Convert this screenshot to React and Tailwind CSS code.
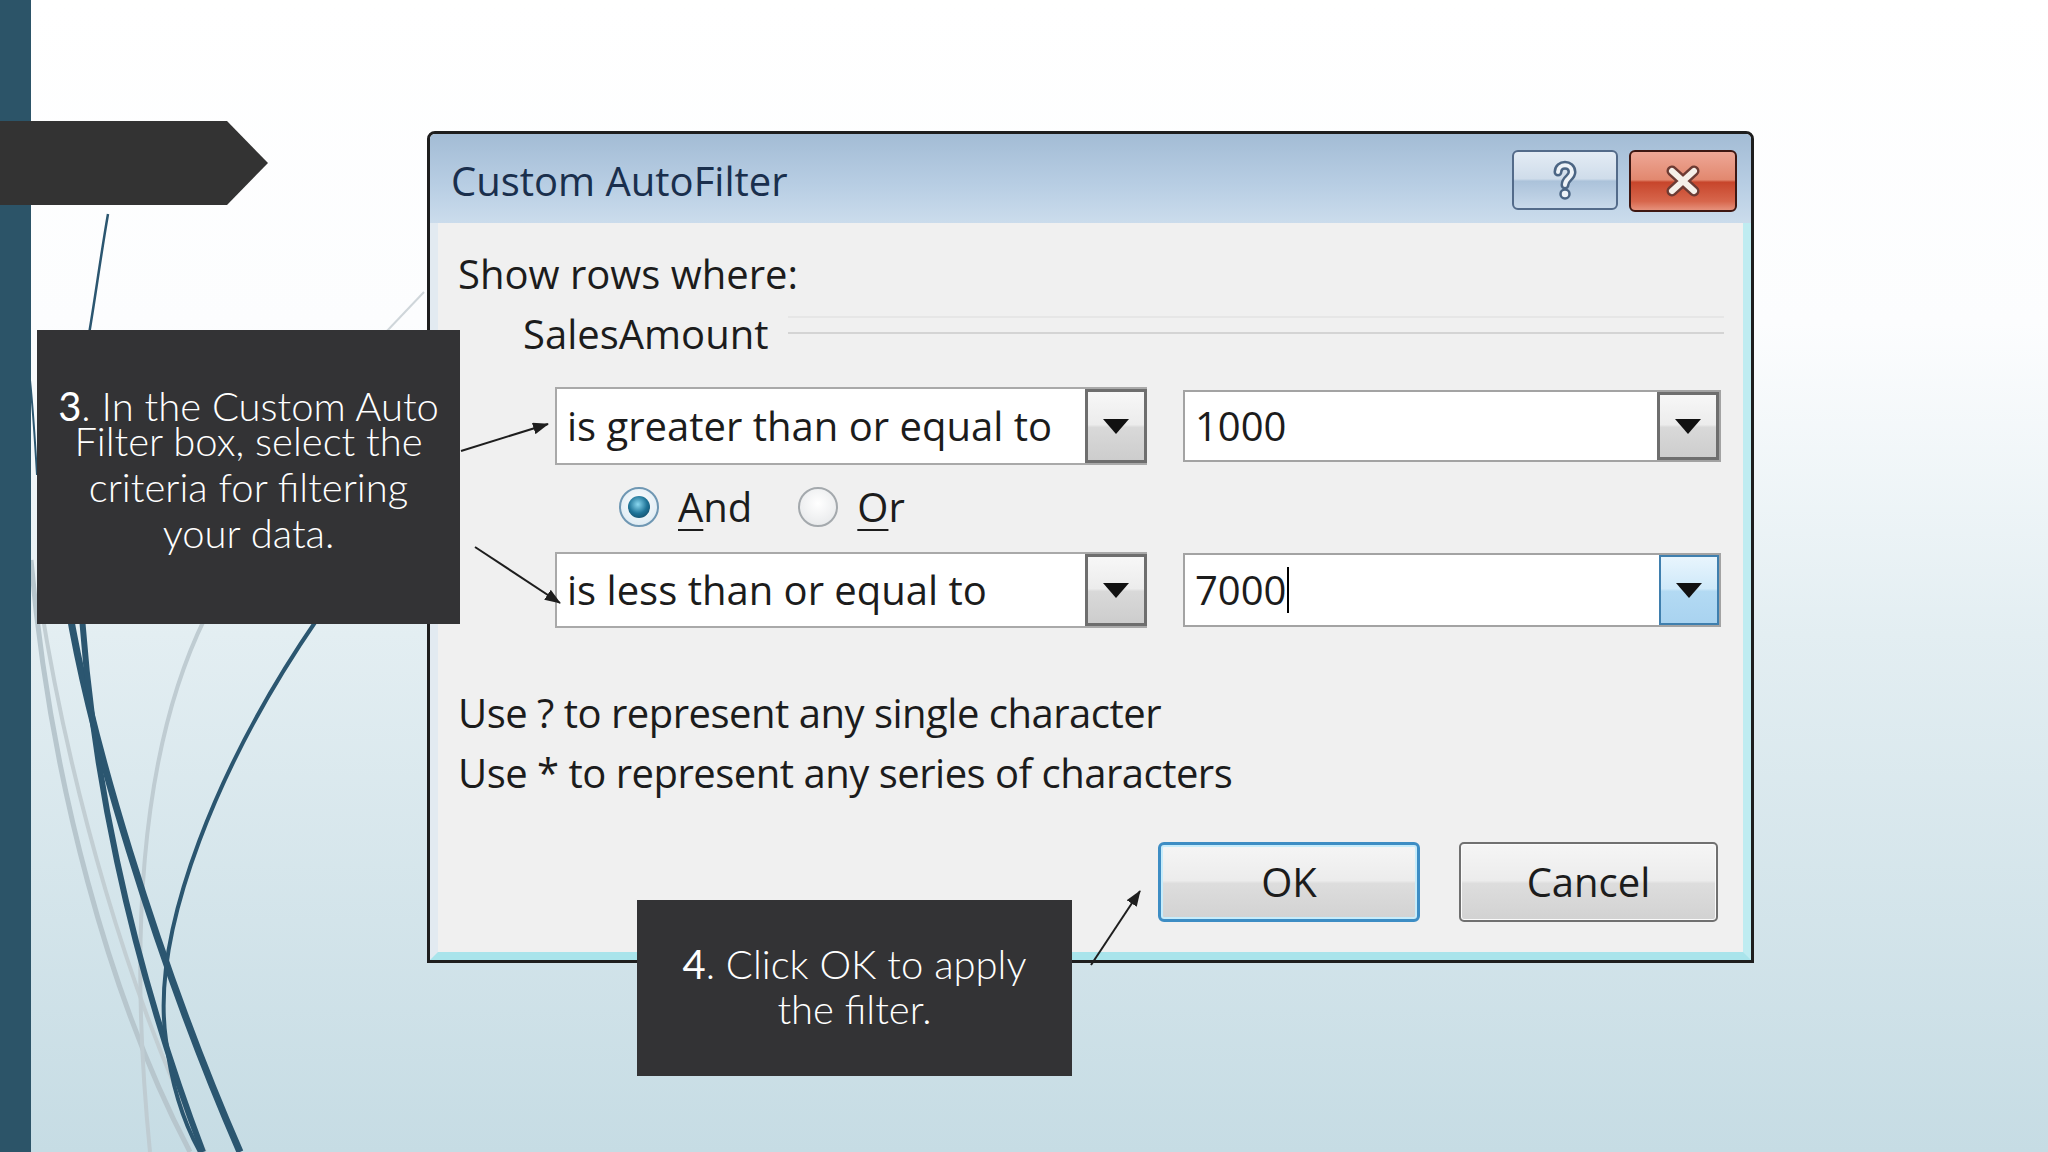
const ui = "font-['Open_Sans','Noto_Sans',sans-serif]";
const light = "font-['Lato','Open_Sans',sans-serif]";

function Caret() {
  return (
    <svg width="26" height="15" viewBox="0 0 26 15">
      <path d="M0 0H26L13 15Z" fill="#111" />
    </svg>
  );
}

function DropButton({ active }) {
  return (
    <div
      className={
        active
          ? "flex h-full w-[60px] shrink-0 items-center justify-center border-2 border-[#3f7fae] bg-[linear-gradient(#e8f5fd,#cfe9f9_48%,#b3daf3_52%,#a9d3f0)]"
          : "flex h-full w-[62px] shrink-0 items-center justify-center border-[3px] border-[#6e6e6e] bg-[linear-gradient(#f7f7f7,#ececec_48%,#d9d9d9_52%,#cdcdcd)]"
      }
    >
      <Caret />
    </div>
  );
}

function Radio({ checked }) {
  return (
    <div
      className={
        checked
          ? "flex h-[40px] w-[40px] shrink-0 items-center justify-center rounded-full border-2 border-[#6f97b3] bg-[radial-gradient(circle_at_50%_40%,#ffffff,#d6e6f0)]"
          : "flex h-[40px] w-[40px] shrink-0 items-center justify-center rounded-full border-2 border-[#a4a9ad] bg-[radial-gradient(circle_at_50%_40%,#ffffff,#e3e5e7)]"
      }
    >
      {checked && (
        <div className="h-[22px] w-[22px] rounded-full bg-[radial-gradient(circle_at_45%_38%,#8ad8f0,#1f7498_50%,#0c3b55)]" />
      )}
    </div>
  );
}

function HelpButton() {
  return (
    <div className="flex h-[60px] w-[106px] items-center justify-center rounded-[6px] border-2 border-[#536b8a] bg-[linear-gradient(#e3ecf5,#cfdcea_48%,#abc2da_52%,#c8d9ea)]">
      <svg width="30" height="42" viewBox="0 0 30 42">
        <path d="M8 13C8 4 22 4 22 13C22 19 15 19 15 26" fill="none" stroke="#4b6584" strokeWidth="9" strokeLinecap="round" />
        <path d="M8 13C8 4 22 4 22 13C22 19 15 19 15 26" fill="none" stroke="#eef3f8" strokeWidth="4" strokeLinecap="round" />
        <circle cx="15" cy="35" r="4.5" fill="#eef3f8" stroke="#4b6584" strokeWidth="2.5" />
      </svg>
    </div>
  );
}

function CloseButton() {
  return (
    <div className="flex h-[62px] w-[108px] items-center justify-center rounded-[6px] border-2 border-[#3e1712] bg-[linear-gradient(#eea796,#e2886f_48%,#c7452b_52%,#d7664c_85%,#e6917c)]">
      <svg width="40" height="34" viewBox="0 0 40 34">
        <path d="M9 7L31 27M31 7L9 27" stroke="#6d3b33" strokeWidth="11" strokeLinecap="round" />
        <path d="M9 7L31 27M31 7L9 27" stroke="#f5f0e9" strokeWidth="6" strokeLinecap="round" />
      </svg>
    </div>
  );
}

function Dialog() {
  return (
    <div className={`relative flex h-[832px] w-[1327px] flex-col rounded-t-[8px] border-[3px] border-[#1e1e1e] ${ui} text-[40px] leading-[48px] text-[#1c1c1c]`}>
      {/* title bar */}
      <div className="flex h-[89px] shrink-0 items-start rounded-t-[5px] bg-[linear-gradient(#a3bcd5,#b7cde3_55%,#cbdcec)]">
        <div className="pl-[21px] pt-[23px] text-[#1a2f4d]">Custom AutoFilter</div>
        <div className="ml-auto mr-[14px] mt-[16px] flex gap-[11px]">
          <HelpButton />
          <CloseButton />
        </div>
      </div>

      {/* body */}
      <div className="flex-1 border-b-[8px] border-l-[8px] border-r-[8px] border-b-[#a9e4eb] border-l-[#e2eaf1] border-r-[#bfecf1] bg-[#f0f0f0] pl-[20px] pt-[27px]">
        <div>Show rows where:</div>

        <div className="mt-[12px] flex items-start pl-[65px]">
          <span>SalesAmount</span>
          <div className="ml-[19px] mr-[19px] flex flex-1 flex-col gap-[14px] pt-[6px]">
            <div className="h-[2px] bg-[#e6e6e6]" />
            <div className="h-[2px] bg-[#d4d4d4]" />
          </div>
        </div>

        <div className="mt-[29px] flex h-[78px] items-center pl-[97px]">
          <div className="flex h-full w-[592px] border-y-2 border-l-2 border-[#a9a9a9] bg-white">
            <div className="flex flex-1 items-center pl-[10px]">is greater than or equal to</div>
            <DropButton />
          </div>
          <div className="ml-[36px] flex h-[72px] w-[538px] border-2 border-[#a3a3a3] bg-white">
            <div className="flex flex-1 items-center pl-[10px]">1000</div>
            <DropButton />
          </div>
        </div>

        <div className="mt-[21px] flex h-[42px] items-center pl-[161px]">
          <Radio checked />
          <span className="ml-[19px]">
            <span className="underline decoration-2 underline-offset-[7px]">A</span>nd
          </span>
          <div className="ml-[46px]">
            <Radio />
          </div>
          <span className="ml-[19px]">
            <span className="underline decoration-2 underline-offset-[7px]">O</span>r
          </span>
        </div>

        <div className="mt-[24px] flex h-[76px] items-center pl-[97px]">
          <div className="flex h-full w-[592px] border-y-2 border-l-2 border-[#a9a9a9] bg-white">
            <div className="flex flex-1 items-center pl-[10px]">is less than or equal to</div>
            <DropButton />
          </div>
          <div className="ml-[36px] flex h-[74px] w-[538px] border-2 border-[#a3a3a3] bg-white">
            <div className="flex flex-1 items-center pl-[10px]">
              7000
              <span className="ml-[1px] h-[46px] w-[2px] bg-black" />
            </div>
            <DropButton active />
          </div>
        </div>

        <div className="mt-[55px] leading-[60px] tracking-[-0.5px]">
          <div>Use ? to represent any single character</div>
          <div>Use * to represent any series of characters</div>
        </div>

        <div className="mt-[39px] flex pl-[700px]">
          <div className="flex h-[80px] w-[262px] items-center justify-center rounded-[6px] border-[3px] border-[#3d8dc4] bg-[linear-gradient(#f5f5f5,#ececec_48%,#dddddd_52%,#d2d2d2)] shadow-[inset_0_0_0_2px_#c6ecfb]">
            OK
          </div>
          <div className="ml-[39px] flex h-[80px] w-[259px] items-center justify-center rounded-[5px] border-2 border-[#707070] bg-[linear-gradient(#f5f5f5,#ececec_48%,#dddddd_52%,#d2d2d2)] shadow-[inset_0_0_0_1px_#fbfbfb]">
            Cancel
          </div>
        </div>
      </div>
    </div>
  );
}

function Wisps() {
  return (
    <svg className="absolute inset-0" width="2048" height="1152" viewBox="0 0 2048 1152" fill="none">
      {/* grey strands */}
      <path d="M31 560C50 780 110 1000 190 1152" stroke="#b7c6cd" strokeWidth="5" />
      <path d="M40 600C70 790 130 1000 205 1152" stroke="#c2ced3" strokeWidth="4" />
      <path d="M205 618C150 730 125 900 150 1152" stroke="#bfccd2" strokeWidth="4" />
      <path d="M424 292L386 332" stroke="#cfd6da" strokeWidth="2" />
      {/* dark strands */}
      <path d="M108 214C100 260 95 300 88 340" stroke="#2b5670" strokeWidth="2.5" />
      <path d="M30 380C33 410 35 440 37 475" stroke="#2b5670" strokeWidth="2" />
      <path d="M62 560C80 720 165 980 240 1152" stroke="#2b5670" strokeWidth="7" />
      <path d="M80 580C88 760 130 960 203 1152" stroke="#2b5670" strokeWidth="6" />
      <path d="M318 618C220 760 150 930 166 1040C172 1090 185 1125 200 1152" stroke="#2b5670" strokeWidth="4" />
    </svg>
  );
}

function Arrows() {
  return (
    <svg className="pointer-events-none absolute inset-0" width="2048" height="1152" viewBox="0 0 2048 1152">
      <defs>
        <marker id="tip" markerUnits="userSpaceOnUse" markerWidth="16" markerHeight="12" refX="15" refY="6" orient="auto">
          <path d="M0 0L16 6L0 12Z" fill="#1e1e1e" />
        </marker>
      </defs>
      <path d="M461 451L548 424" stroke="#1e1e1e" strokeWidth="2" markerEnd="url(#tip)" />
      <path d="M475 547L560 603" stroke="#1e1e1e" strokeWidth="2" markerEnd="url(#tip)" />
      <path d="M1091 965L1140 891" stroke="#1e1e1e" strokeWidth="2" markerEnd="url(#tip)" />
    </svg>
  );
}

export default function App() {
  return (
    <div className="relative h-[1152px] w-[2048px] overflow-hidden bg-[linear-gradient(180deg,#ffffff_0%,#fcfdfe_28%,#e3eef2_55%,#c6dce4_100%)]">
      <Wisps />

      <div className="relative flex h-full">
        <div className="w-[31px] shrink-0 bg-[#2c5468]" />
        <div className="pl-[396px] pt-[131px]">
          <Dialog />
        </div>
      </div>

      {/* slide title placeholder */}
      <div className="absolute left-0 top-[121px] h-[84px] w-[268px] bg-[#333333] [clip-path:polygon(0_0,227px_0,100%_50%,227px_100%,0_100%)]" />

      {/* callout 3 */}
      <div className={`absolute left-[37px] top-[330px] h-[294px] w-[423px] bg-[#333335] pt-[53px] text-center text-[40px] font-light leading-[46px] text-white ${light}`}>
        <div>
          <span className="font-normal">3</span>. In the Custom Auto
        </div>
        <div className="-mt-[11px]">Filter box, select the</div>
        <div>criteria for filtering</div>
        <div>your data.</div>
      </div>

      {/* callout 4 */}
      <div className={`absolute left-[637px] top-[900px] h-[176px] w-[435px] bg-[#333335] pt-[42px] text-center text-[40px] font-light leading-[45px] text-white ${light}`}>
        <div>
          <span className="font-normal">4</span>. Click OK to apply
        </div>
        <div>the filter.</div>
      </div>

      <Arrows />
    </div>
  );
}
